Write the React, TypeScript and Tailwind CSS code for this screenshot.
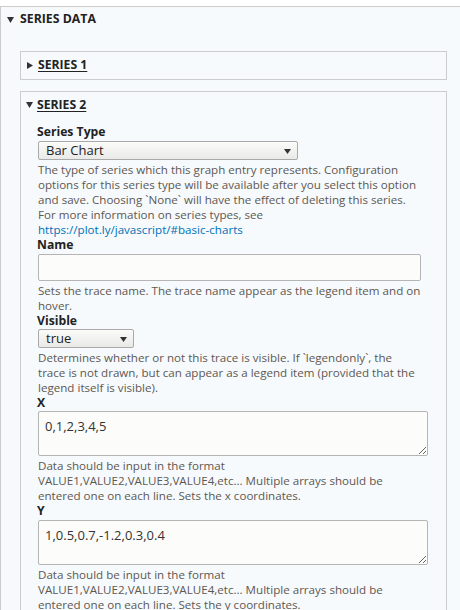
import React from "react";

const font = { fontFamily: '"Open Sans", "DejaVu Sans", sans-serif' };

function Caret() {
  return (
    <svg width="7" height="5" viewBox="0 0 7 5" className="absolute right-[6px] top-[7px]">
      <polygon points="0,0 7,0 3.5,5" fill="#333" />
    </svg>
  );
}

function Desc({ children }: { children: React.ReactNode }) {
  return <div className="mt-[2px] text-[11.6px] leading-[15px] text-[#5e5851]">{children}</div>;
}

function Label({ children }: { children: React.ReactNode }) {
  return <div className="-ml-[1px] text-[12.2px] font-bold leading-[15px] text-[#222]">{children}</div>;
}

function Select({ value, width }: { value: string; width: string }) {
  return (
    <div
      className={`relative mt-[2px] h-[19px] ${width} rounded-[2px] border border-[#a9a9a9] bg-gradient-to-b from-[#fbfbfa] to-[#e9e9e8] pl-[7px] text-[13px] leading-[17px] text-[#222]`}
    >
      {value}
      <Caret />
    </div>
  );
}

function TextArea({ value }: { value: string }) {
  return (
    <textarea
      readOnly
      defaultValue={value}
      className="mt-[2px] block h-[45px] w-[390px] rounded-[2px] border border-[#b5b5b5] bg-[#fcfcfa] px-[6px] pt-[5px] text-[13px] leading-[18px] text-[#333] outline-none"
      style={font}
    />
  );
}

export default function App() {
  return (
    <div className="h-[610px] w-[460px] overflow-hidden bg-white pt-[6px]" style={font}>
      <div className="h-[620px] w-[480px] border-l border-t border-[#cccccc] bg-[#f6fafd]">
        <div className="flex h-[25px] items-center pl-[6px] text-[12.3px] font-bold text-[#222]">
          <svg width="7" height="6" viewBox="0 0 7 6" className="mr-[6px]">
            <polygon points="0,0 7,0 3.5,6" fill="#333" />
          </svg>
          SERIES DATA
        </div>

        <div className="ml-[19px] mt-[19px] flex h-[29px] w-[427px] items-center border border-[#cccccc] pl-[6px] text-[12.2px] font-bold text-[#222]">
          <svg width="6" height="7" viewBox="0 0 6 7" className="mr-[5px]">
            <polygon points="0,0 6,3.5 0,7" fill="#333" />
          </svg>
          <span className="underline underline-offset-2">SERIES 1</span>
        </div>

        <div className="ml-[19px] mt-[11px] w-[427px] border border-[#cccccc] pb-[20px]">
          <div className="flex h-[26px] items-center pl-[5px] text-[12.2px] font-bold text-[#222]">
            <svg width="7" height="6" viewBox="0 0 7 6" className="mr-[4px]">
              <polygon points="0,0 7,0 3.5,6" fill="#333" />
            </svg>
            <span className="underline underline-offset-2">SERIES 2</span>
          </div>

          <div className="pl-[17px]">
            <div className="mt-[6px]">
              <Label>Series Type</Label>
            </div>
            <Select value="Bar Chart" width="w-[260px]" />
            <Desc>
              The type of series which this graph entry represents. Configuration
              <br />
              options for this series type will be available after you select this option
              <br />
              and save. Choosing `None` will have the effect of deleting this series.
              <br />
              For more information on series types, see
              <br />
              <span className="text-[#0071b8]">https://plot.ly/javascript/#basic-charts</span>
            </Desc>

            <Label>Name</Label>
            <div className="mt-[2px] h-[27px] w-[383px] rounded-[2px] border border-[#b5b5b5] bg-[#fcfcfa]" />
            <Desc>
              Sets the trace name. The trace name appear as the legend item and on
              <br />
              hover.
            </Desc>

            <Label>Visible</Label>
            <div className="-mt-[1px]">
              <Select value="true" width="w-[96px]" />
            </div>
            <Desc>
              Determines whether or not this trace is visible. If `legendonly`, the
              <br />
              trace is not drawn, but can appear as a legend item (provided that the
              <br />
              legend itself is visible).
            </Desc>

            <Label>X</Label>
            <div className="-mt-[1px]">
              <TextArea value="0,1,2,3,4,5" />
            </div>
            <Desc>
              Data should be input in the format
              <br />
              VALUE1,VALUE2,VALUE3,VALUE4,etc... Multiple arrays should be
              <br />
              entered one on each line. Sets the x coordinates.
            </Desc>

            <Label>Y</Label>
            <TextArea value="1,0.5,0.7,-1.2,0.3,0.4" />
            <Desc>
              Data should be input in the format
              <br />
              VALUE1,VALUE2,VALUE3,VALUE4,etc... Multiple arrays should be
              <br />
              entered one on each line. Sets the y coordinates.
            </Desc>
          </div>
        </div>
      </div>
    </div>
  );
}
